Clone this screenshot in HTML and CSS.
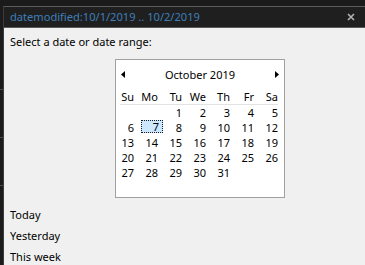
FILE: index.html
```html
<!DOCTYPE html>
<html>
<head>
<meta charset="utf-8">
<link rel="stylesheet" href="styles.css">
</head>
<body>
<div class="screen">
  <div class="backstrip"><i class="l1"></i><i class="l2"></i><i class="l3"></i></div>
  <div class="window">
    <div class="titlebar">
      <span class="title">datemodified:10/1/2019 .. 10/2/2019</span>
      <svg class="close" width="8" height="8" viewBox="0 0 8 8"><path d="M1 1L7 7M7 1L1 7" stroke="#b4b4b4" stroke-width="1.6"/></svg>
    </div>
    <div class="content">
      <div class="prompt">Select a date or date range:</div>
      <div class="cal">
        <div class="calhead">
          <svg class="arrow" width="4" height="7" viewBox="0 0 4 7"><path d="M4 0V7L0 3.5Z" fill="#000"/></svg>
          <span class="month">October 2019</span>
          <svg class="arrow" width="4" height="7" viewBox="0 0 4 7"><path d="M0 0V7L4 3.5Z" fill="#000"/></svg>
        </div>
        <div class="grid names">
          <span>Su</span><span>Mo</span><span>Tu</span><span>We</span><span>Th</span><span>Fr</span><span>Sa</span>
        </div>
        <div class="sep"></div>
        <div class="grid days">
          <span></span><span></span><span>1</span><span>2</span><span>3</span><span>4</span><span>5</span>
          <span>6</span><span class="sel"><b>7</b></span><span>8</span><span>9</span><span>10</span><span>11</span><span>12</span>
          <span>13</span><span>14</span><span>15</span><span>16</span><span>17</span><span>18</span><span>19</span>
          <span>20</span><span>21</span><span>22</span><span>23</span><span>24</span><span>25</span><span>26</span>
          <span>27</span><span>28</span><span>29</span><span>30</span><span>31</span><span></span><span></span>
        </div>
      </div>
      <ul class="list">
        <li>Today</li>
        <li>Yesterday</li>
        <li>This week</li>
      </ul>
    </div>
  </div>
</div>
</body>
</html>
```
FILE: styles.css
```css
html, body {
  margin: 0;
  padding: 0;
  background: #1b1b1b;
}
body {
  font-family: "Noto Sans", "Open Sans", sans-serif;
  font-size: 11px;
  color: #000;
}
.screen {
  width: 365px;
  height: 265px;
  overflow: hidden;
  display: flex;
  padding-top: 6px;
  box-sizing: border-box;
}
.backstrip {
  width: 3px;
  flex: none;
}
.backstrip i {
  display: block;
  height: 1px;
  background: #4a4a4a;
}
.backstrip .l1 { margin-top: 83px; }
.backstrip .l2 { margin-top: 47px; }
.backstrip .l3 { margin-top: 47px; }
.window {
  flex: 1;
  display: flex;
  flex-direction: column;
  border-top: 1px solid #5c5c5c;
  border-left: 1px solid #3c3c3c;
}
.titlebar {
  height: 20px;
  background: #1f1f1f;
  border-bottom: 1px solid #5a5a5a;
  display: flex;
  align-items: center;
  justify-content: space-between;
  padding: 0 10px 0 6px;
}
.title {
  color: #3f7fb8;
  line-height: 20px;
  font-size: 11.1px;
}
.close {
  display: block;
}
.content {
  flex: 1;
  background: #f0f0f0;
  padding: 6px 0 0 6px;
}
.prompt {
  line-height: 16px;
}
.cal {
  margin: 9px 0 0 105px;
  width: 168px;
  border: 1px solid #a0a0a0;
  background: #fff;
  padding-bottom: 17px;
}
.calhead {
  height: 29px;
  display: flex;
  align-items: center;
  justify-content: space-between;
  padding: 0 5px;
}
.arrow {
  display: block;
}
.month {
  line-height: 29px;
}
.grid {
  display: grid;
  grid-template-columns: repeat(7, 24px);
  grid-auto-rows: 15px;
}
.grid span {
  text-align: right;
  padding-right: 6px;
  line-height: 15px;
}
.sep {
  height: 1px;
  background: #e3e3e3;
  margin: 0 6px 0 4px;
}
.days .sel {
  padding: 0;
}
.days .sel b {
  display: block;
  font-weight: normal;
  margin: 0 1px 2px 1px;
  height: 11px;
  line-height: 11px;
  padding-right: 3px;
  background: #cce8ff;
  border: 1px dotted #1a1a1a;
}
.list {
  list-style: none;
  margin: 6px 0 0 0;
  padding: 0;
}
.list li {
  line-height: 21px;
}
```
